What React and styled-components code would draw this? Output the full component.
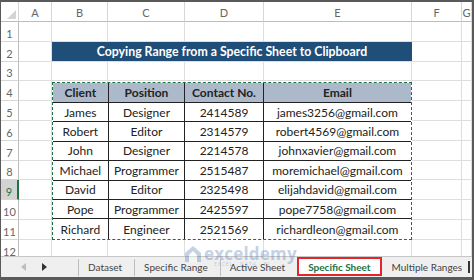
import React from "react";
import styled, { createGlobalStyle } from "styled-components";

const Global = createGlobalStyle`
  html, body { margin: 0; padding: 0; background: #5a5a5a; }
  * { box-sizing: border-box; }
`;

const Frame = styled.div`
  position: relative;
  width: 474px;
  height: 280px;
  padding: 2px 2px 3px 1px;
  background: #5a5a5a;
  display: flex;
  flex-direction: column;
  font-family: "Lato", "Open Sans", sans-serif;
  overflow: hidden;
`;

const Sheet = styled.div`
  height: 254px;
  flex-shrink: 0;
  overflow: hidden;
  background: #fff;
  display: grid;
  grid-template-columns: 18px 33px 56px 77px 79px 148px 50px 1fr;
  grid-template-rows: 20px repeat(12, 19.8px);
`;

const Cell = styled.div`
  grid-column: ${(p) => p.$c};
  grid-row: ${(p) => p.$r};
  border-right: 1px solid #dedede;
  border-bottom: 1px solid #dedede;
`;

const ColHead = styled.div`
  grid-column: ${(p) => p.$c};
  grid-row: 1;
  border-right: 1px solid #d6d6d6;
  border-bottom: 1px solid #bcbcbc;
  display: flex;
  align-items: flex-end;
  justify-content: center;
  padding-bottom: 2px;
  font-size: 11px;
  color: #666;
  position: relative;
`;

const Corner = styled(ColHead)`
  &::after {
    content: "";
    position: absolute;
    right: 2px;
    bottom: 2px;
    width: 0;
    height: 0;
    border-left: 9px solid transparent;
    border-bottom: 9px solid #d4d4d4;
  }
`;

const RowHead = styled.div`
  grid-column: 1;
  grid-row: ${(p) => p.$r};
  border-right: ${(p) => (p.$sel ? "2px solid #217346" : "1px solid #bcbcbc")};
  border-bottom: 1px solid #d6d6d6;
  background: ${(p) => (p.$sel ? "#d3d3d3" : "#fff")};
  color: ${(p) => (p.$sel ? "#217346" : "#666")};
  display: flex;
  align-items: flex-end;
  justify-content: center;
  padding-bottom: 1px;
  font-size: 11px;
`;

const Title = styled.div`
  grid-column: 3 / 7;
  grid-row: 3;
  background: #1f4e78;
  color: #fff;
  font-weight: 700;
  font-size: 12.3px;
  display: flex;
  align-items: center;
  justify-content: center;
  border-bottom: 1px solid #dedede;
`;

const Table = styled.div`
  grid-column: 3 / 7;
  grid-row: 5 / 13;
  display: grid;
  grid-template-columns: 56fr 77fr 79fr 148fr;
  grid-template-rows: repeat(8, 1fr);
  border: 1.5px dashed #1e7145;
  background: #fff;
  margin: 1px 0 0 0;
`;

const TCell = styled.div`
  display: flex;
  align-items: center;
  justify-content: center;
  font-size: 12px;
  color: #222;
  background: ${(p) => (p.$head ? "#acb9ca" : "#fff")};
  font-weight: ${(p) => (p.$head ? 700 : 400)};
  border-right: ${(p) => (p.$lastCol ? "none" : "1px solid #222")};
  border-bottom: ${(p) => (p.$lastRow ? "none" : "1px solid #222")};
  white-space: nowrap;
`;

const TabBar = styled.div`
  height: 21px;
  flex-shrink: 0;
  background: #efefef;
  border-top: 1px solid #c6c6c6;
  display: flex;
  align-items: center;
  font-size: 10px;
  color: #444;
  overflow: hidden;
`;

const Nav = styled.div`
  width: 77px;
  flex-shrink: 0;
  height: 100%;
  display: flex;
  align-items: center;
  padding-left: 20px;
  gap: 16px;
`;

const Tab = styled.div`
  height: 17px;
  flex-shrink: 0;
  display: flex;
  align-items: center;
  padding: 0 ${(p) => (p.$bare ? "0" : "12px")} 0 ${(p) => (p.$bare ? "10px" : "9px")};
  border-left: ${(p) => (p.$bare ? "none" : "1px solid #bdbdbd")};
  white-space: nowrap;
`;

const ActiveTab = styled.div`
  align-self: flex-start;
  flex-shrink: 0;
  height: 19px;
  padding: 0 9px;
  display: flex;
  align-items: center;
  background: #fff;
  border: 2px solid #e3262c;
  color: #217346;
  font-weight: 700;
  white-space: nowrap;
`;

const EndMark = styled.div`
  width: 2px;
  height: 12px;
  flex-shrink: 0;
  background: #333;
  margin-left: 6px;
`;

const Watermark = styled.div`
  position: absolute;
  left: 184px;
  top: 245px;
  display: flex;
  align-items: flex-start;
  gap: 2px;
  opacity: 0.35;
  pointer-events: none;
`;

const WmText = styled.div`
  display: flex;
  flex-direction: column;
  align-items: flex-start;
  line-height: 1;
`;

const WmName = styled.span`
  font-family: "Open Sans", sans-serif;
  font-weight: 700;
  font-size: 17px;
  color: #5a7fb8;
  letter-spacing: 0.2px;
`;

const WmTag = styled.span`
  font-family: "Open Sans", sans-serif;
  font-size: 5px;
  color: #5a7fb8;
  letter-spacing: 1px;
  margin-left: 10px;
`;

const cols = ["A", "B", "C", "D", "E", "F", "G"];

const data = [
  ["Client", "Position", "Contact No.", "Email"],
  ["James", "Designer", "2414589", "james3256@gmail.com"],
  ["Robert", "Editor", "2314579", "robert4569@gmail.com"],
  ["John", "Designer", "2214578", "johnxavier@gmail.com"],
  ["Michael", "Programmer", "2515487", "moremichael@gmail.com"],
  ["David", "Editor", "2325498", "elijahdavid@gmail.com"],
  ["Pope", "Programmer", "2425597", "pope7758@gmail.com"],
  ["Richard", "Engineer", "2521569", "richardleon@gmail.com"],
];

const tabs = ["Dataset", "Specific Range", "Active Sheet"];

export default function App() {
  const bg = [];
  for (let r = 2; r <= 13; r++) {
    for (let c = 2; c <= 8; c++) {
      bg.push(<Cell key={`${r}-${c}`} $r={r} $c={c} />);
    }
  }
  return (
    <>
      <Global />
      <Frame>
        <Sheet>
          <Corner $c={1} />
          {cols.map((l, i) => (
            <ColHead key={l} $c={i + 2}>
              {l}
            </ColHead>
          ))}
          {Array.from({ length: 12 }, (_, i) => (
            <RowHead key={i} $r={i + 2} $sel={i + 1 === 9}>
              {i + 1}
            </RowHead>
          ))}
          {bg}
          <Title>Copying Range from a Specific Sheet to Clipboard</Title>
          <Table>
            {data.map((row, ri) =>
              row.map((v, ci) => (
                <TCell
                  key={`${ri}-${ci}`}
                  $head={ri === 0}
                  $lastCol={ci === 3}
                  $lastRow={ri === data.length - 1}
                >
                  {v}
                </TCell>
              ))
            )}
          </Table>
        </Sheet>
        <TabBar>
          <Nav>
            <svg width="5" height="8" viewBox="0 0 5 8">
              <path d="M5 0 L0 4 L5 8 Z" fill="#bdbdbd" />
            </svg>
            <svg width="5" height="8" viewBox="0 0 5 8">
              <path d="M0 0 L5 4 L0 8 Z" fill="#333" />
            </svg>
          </Nav>
          {tabs.map((t) => (
            <Tab key={t}>{t}</Tab>
          ))}
          <ActiveTab>Specific Sheet</ActiveTab>
          <Tab $bare>Multiple Ranges</Tab>
          <EndMark />
        </TabBar>
        <Watermark>
          <svg width="18" height="18" viewBox="0 0 18 18">
            <path d="M9 1 L17 8 L17 17 L1 17 L1 8 Z" fill="#5a7fb8" />
            <path d="M5 10 L9 6 L13 10 L13 17 L5 17 Z" fill="#fff" />
          </svg>
          <WmText>
            <WmName>exceldemy</WmName>
            <WmTag>EXCEL · DATA · BI</WmTag>
          </WmText>
        </Watermark>
      </Frame>
    </>
  );
}
